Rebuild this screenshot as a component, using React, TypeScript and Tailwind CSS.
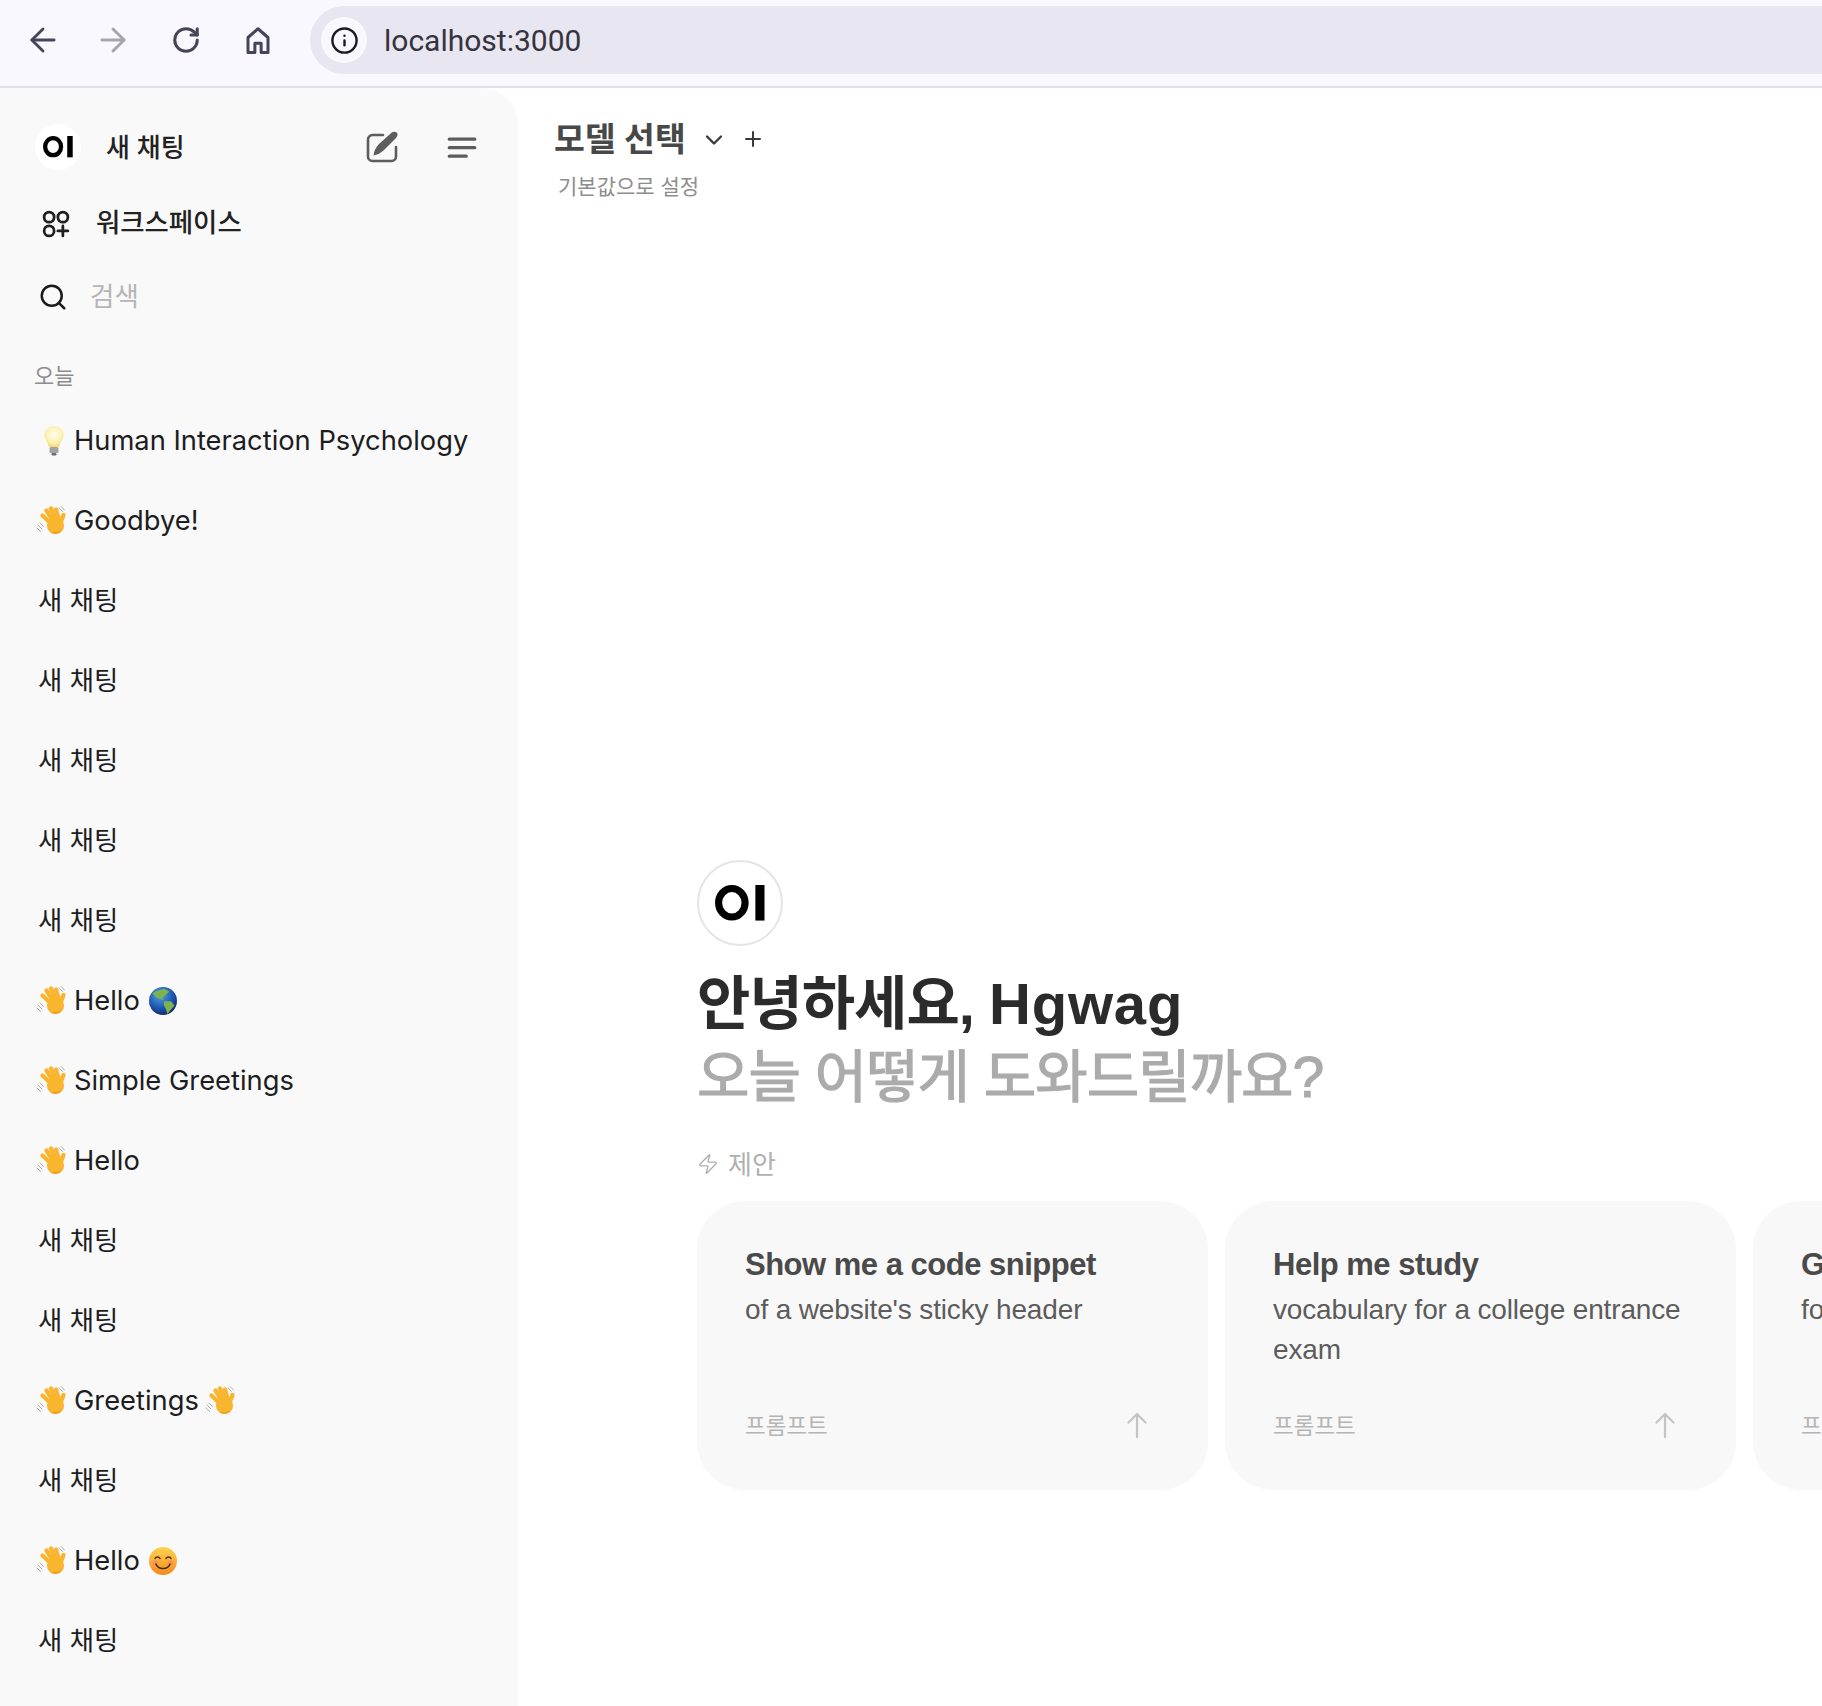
// App.tsx
// Open WebUI home screen inside a browser window

import { ArrowLeft, ArrowRight, ChevronDown, Info, Plus, RotateCw, Search, Zap } from "lucide-react";

const UI_FONT = "font-['Inter','Noto_Sans_CJK_KR',sans-serif]";
const HEAD_FONT = "font-['Liberation_Sans','Noto_Sans_CJK_KR',sans-serif]";

function OiLogo({ width }: { width: number }) {
  return (
    <svg width={width} height={(width * 37) / 52} viewBox="0 0 52 37" fill="none">
      <ellipse cx="17.500" cy="18.500" rx="13.800" ry="14.800" stroke="#000" strokeWidth="7.400" />
      <rect x="42" y="0" width="9.500" height="37" fill="#000" />
    </svg>
  );
}

function WaveEmoji({ className = "" }: { className?: string }) {
  return (
    <svg width="32" height="32" viewBox="3 0 32 32" className={`shrink-0 overflow-visible ${className}`}>
      <g stroke="#a8a8a8" strokeWidth="0.9" strokeLinecap="round">
        <path d="M3 20l4 4M2 23l3.500 3.500M5 18l3.500 3.500" />
        <path d="M24 3l3.500 3.500M26 1.500l3.500 3.500" />
      </g>
      <g stroke="#fab52e" strokeWidth="4.400" strokeLinecap="round">
        <path d="M7.500 10.500l9 8.500" />
        <path d="M11.500 5.500l7 11" />
        <path d="M16 3.500l5 12" />
        <path d="M21 4.500l3 11" />
        <path d="M28.500 10l-3.500 9" />
      </g>
      <circle cx="20.500" cy="20.500" r="8.600" fill="#fab52e" />
      <path d="M15 27c3 2.500 9 2.500 12-2-2 1-6 3-12 2z" fill="#ee9a1e" />
    </svg>
  );
}

function BulbEmoji() {
  return (
    <svg width="32" height="32" viewBox="0 0 32 32" className="shrink-0">
      <defs>
        <radialGradient id="bulbGlow" cx="50%" cy="40%" r="60%">
          <stop offset="0%" stopColor="#fffdf0" />
          <stop offset="70%" stopColor="#fdf0b0" />
          <stop offset="100%" stopColor="#f6d770" />
        </radialGradient>
      </defs>
      <path d="M16 1c-5.500 0-9.500 4-9.500 9 0 4.500 3.500 7 4.500 12h10c1-5 4.500-7.500 4.500-12 0-5-4-9-9.500-9z" fill="url(#bulbGlow)" />
      <rect x="11.500" y="22" width="9" height="6" rx="1.500" fill="#a3a3a3" />
      <rect x="13.500" y="28" width="5" height="2.500" rx="1.200" fill="#6b6b6b" />
    </svg>
  );
}

function GlobeEmoji() {
  return (
    <svg width="30" height="30" viewBox="0 0 30 30" className="ml-[4px] shrink-0">
      <defs>
        <radialGradient id="globeSea" cx="40%" cy="30%" r="75%">
          <stop offset="0%" stopColor="#4fa3e8" />
          <stop offset="65%" stopColor="#1d4fa8" />
          <stop offset="100%" stopColor="#12275e" />
        </radialGradient>
      </defs>
      <circle cx="15" cy="15" r="14" fill="url(#globeSea)" />
      <path d="M7.300 5.500L16 2.800l5.300 2.700-3.500 3.500-3.500 2.800L16 14.300l-3.500-1.100-5.200-2.400-2.800-3.500z" fill="#7cb24f" />
      <path d="M16 15.300h7l3.500 4.200-4.500 5.300-2.500 3.500-1.700-5.300L16 19.500z" fill="#7cb24f" />
    </svg>
  );
}

function SmileEmoji() {
  return (
    <svg width="30" height="30" viewBox="0 0 30 30" className="ml-[4px] shrink-0">
      <defs>
        <linearGradient id="smileFill" x1="0" y1="0" x2="0" y2="1">
          <stop offset="0%" stopColor="#fdd44f" />
          <stop offset="100%" stopColor="#f58a1f" />
        </linearGradient>
      </defs>
      <circle cx="15" cy="15" r="14" fill="url(#smileFill)" />
      <circle cx="7.500" cy="17" r="3" fill="#f77" opacity="0.45" />
      <circle cx="22.500" cy="17" r="3" fill="#f77" opacity="0.45" />
      <path d="M7 12.500c1-2 4-2 5 0M18 12.500c1-2 4-2 5 0" stroke="#4a2c12" strokeWidth="1.500" fill="none" strokeLinecap="round" />
      <path d="M8 18c2 6 12 6 14 0" stroke="#4a2c12" strokeWidth="1.500" fill="none" strokeLinecap="round" />
    </svg>
  );
}

function ChatRow({ children }: { children: React.ReactNode }) {
  return (
    <div className="flex h-[80px] shrink-0 items-center gap-[4px] pl-[38px] text-[27.300px] text-[#1d1d1f]">
      {children}
    </div>
  );
}

const NewChat = () => <ChatRow><span className="text-[26.400px]">새 채팅</span></ChatRow>;

function PromptCard({ title, sub }: { title: string; sub: string }) {
  return (
    <div className="flex h-[289px] w-[511px] shrink-0 flex-col rounded-[48px] bg-[#f8f8f8] pl-[48px] pr-[40px] pt-[44px] pb-[49px]">
      <div className="h-[40px] whitespace-nowrap text-[31px] font-bold leading-[40px] tracking-[-0.5px] text-[#4a4a4a]">{title}</div>
      <div className="mt-[5px] text-[28px] leading-[40px] tracking-[-0.15px] text-[#5c5c5c]">{sub}</div>
      <div className="mt-auto flex h-[32px] items-center justify-between pr-[20px]">
        <span className="mt-[3px] text-[22.500px] text-[#b5b5b5]">프롬프트</span>
        <svg width="22" height="26" viewBox="0 0 22 26" fill="none" stroke="#c4c4c4" strokeWidth="2.200" strokeLinecap="round" strokeLinejoin="round">
          <path d="M11 25V2M2.500 10.500L11 2l8.500 8.500" />
        </svg>
      </div>
    </div>
  );
}

export default function App() {
  return (
    <div className={`flex h-[1706px] w-[1822px] flex-col overflow-hidden bg-white ${UI_FONT}`}>
      {/* Browser toolbar */}
      <div className="flex h-[88px] shrink-0 items-center border-b-2 border-[#e2dfec] bg-[#faf8ff] pb-[6px] pl-[24px]">
        <ArrowLeft size={38} strokeWidth={1.8} className="text-[#454559]" />
        <ArrowRight size={38} strokeWidth={1.8} className="ml-[32px] text-[#a5a3ad]" />
        <RotateCw size={30} strokeWidth={2.4} className="ml-[39px] text-[#454559]" />
        <svg width="30" height="30" viewBox="0 0 24 24" fill="none" stroke="#454559" strokeWidth="2.400" className="ml-[42px]">
          <path d="M4 22V10l8-7 8 7v12h-5.500v-7.500h-5V22z" strokeLinejoin="round" />
        </svg>
        <div className="ml-[37px] flex h-[68px] flex-1 items-center rounded-l-[34px] bg-[#e8e6f0] pl-[11px]">
          <div className="flex h-[46px] w-[46px] items-center justify-center rounded-full bg-[#faf8ff]">
            <Info size={29} strokeWidth={2} className="text-[#1c1b22]" />
          </div>
          <span className="ml-[17px] font-['Roboto'] text-[30px] font-normal text-[#35343f]">localhost:3000</span>
        </div>
      </div>

      <div className="flex min-h-0 flex-1">
        {/* Sidebar */}
        <aside className="flex w-[518px] shrink-0 flex-col overflow-hidden rounded-tr-[36px] bg-[#f9f9f9] pt-[36px]">
          <div className="flex h-[46px] shrink-0 items-center pl-[35px] pr-[39px]">
            <div className="flex h-[46px] w-[46px] items-center justify-center rounded-full bg-white">
              <OiLogo width={30} />
            </div>
            <span className="ml-[25px] text-[26px] font-medium text-[#222]">새 채팅</span>
            <svg width="34" height="34" viewBox="0 0 34 34" fill="none" className="ml-auto">
              <path d="M18 5H7.500A4.500 4.500 0 0 0 3 9.500V26.500A4.500 4.500 0 0 0 7.500 31H26.500A4.500 4.500 0 0 0 31 26.500V17" stroke="#5d5d5d" strokeWidth="2.600" strokeLinecap="round" />
              <path d="M8.500 25.500C9 21 11 17 14 14L26.500 2.800C28.500 1 33 1.500 32.500 5C32.300 6.300 31.500 7.500 30.500 8.500L19 20C16 23 12 25 8.500 25.500Z" fill="#5d5d5d" />
            </svg>
            <svg width="34" height="34" viewBox="0 0 24 24" fill="none" stroke="#5d5d5d" strokeWidth="2.300" strokeLinecap="round" className="ml-[46px]">
              <path d="M3 6.500h18M3 12.500h18M3 18.500h12" />
            </svg>
          </div>

          <div className="mt-[30px] flex h-[48px] shrink-0 items-center pl-[41px]">
            <svg width="30" height="30" viewBox="0 0 24 24" fill="none" stroke="#1f1f1f" strokeWidth="2.200">
              <circle cx="6.500" cy="6.500" r="4" />
              <circle cx="17.500" cy="6.500" r="4" />
              <circle cx="6.500" cy="17.500" r="4" />
              <path d="M17.500 13.500v8M13.500 17.500h8" strokeLinecap="round" />
            </svg>
            <span className="mb-[2px] ml-[25px] text-[26.400px] font-medium text-[#222]">워크스페이스</span>
          </div>

          <div className="mt-[25px] flex h-[48px] shrink-0 items-center pl-[38px]">
            <Search size={30} strokeWidth={2} className="text-[#1a1a1a]" />
            <span className="ml-[22px] text-[26.500px] text-[#b5b5b5]">검색</span>
          </div>

          <div className="mt-[40px] h-[30px] shrink-0 pl-[34px] text-[22px] leading-[30px] text-[#8c8c8c]">오늘</div>

          <div className="mt-[10px] flex flex-col">
            <ChatRow><BulbEmoji /><span>Human Interaction Psychology</span></ChatRow>
            <ChatRow><WaveEmoji /><span>Goodbye!</span></ChatRow>
            <NewChat />
            <NewChat />
            <NewChat />
            <NewChat />
            <NewChat />
            <ChatRow><WaveEmoji /><span>Hello</span><GlobeEmoji /></ChatRow>
            <ChatRow><WaveEmoji /><span>Simple Greetings</span></ChatRow>
            <ChatRow><WaveEmoji /><span>Hello</span></ChatRow>
            <NewChat />
            <NewChat />
            <ChatRow><WaveEmoji /><span>Greetings</span><WaveEmoji className="ml-[4px]" /></ChatRow>
            <NewChat />
            <ChatRow><WaveEmoji /><span>Hello</span><SmileEmoji /></ChatRow>
            <NewChat />
            <NewChat />
          </div>
        </aside>

        {/* Main */}
        <main className="flex min-w-0 flex-1 flex-col pt-[28px]">
          <div className="flex h-[44px] items-center pl-[36px]">
            <span className="mt-[2px] text-[33.500px] font-semibold text-[#484848]">모델 선택</span>
            <ChevronDown size={28} strokeWidth={2} className="ml-[14px] mt-[4px] text-[#3a3a3a]" />
            <Plus size={24} strokeWidth={2} className="ml-[13px] mt-[2px] text-[#3a3a3a]" />
          </div>
          <div className="mt-[13px] h-[28px] pl-[40px] text-[21px] leading-[28px] text-[#8d8d8d]">기본값으로 설정</div>

          <div className="mt-[659px] pl-[179px]">
            <div className="flex h-[86px] w-[86px] items-center justify-center rounded-full border-2 border-[#e5e5e5]">
              <OiLogo width={50} />
            </div>
            <div className={`mt-[22px] text-[58px] leading-[71px] ${HEAD_FONT}`}>
              <div className="font-bold tracking-[-1px] text-[#2b2b2b]">
                안녕하세요, <span className="tracking-[0.8px]">Hgwag</span>
              </div>
              <div className="mt-[3px] text-[57px] tracking-[-1px] text-[#ababab] [-webkit-text-stroke:1.200px_#ababab]">오늘 어떻게 도와드릴까요?</div>
            </div>
            <div className="mt-[35px] flex h-[32px] items-center text-[26px] text-[#b0b0b0]">
              <Zap size={22} strokeWidth={1.5} className="-rotate-[5px]" />
              <span className="ml-[9px] mt-[1px]">제안</span>
            </div>
            <div className={`mt-[21px] flex gap-[17px] ${HEAD_FONT}`}>
              <PromptCard title="Show me a code snippet" sub="of a website's sticky header" />
              <PromptCard title="Help me study" sub="vocabulary for a college entrance exam" />
              <PromptCard title="Give me ideas" sub="for what to do with my kids' art" />
            </div>
          </div>
        </main>
      </div>
    </div>
  );
}
